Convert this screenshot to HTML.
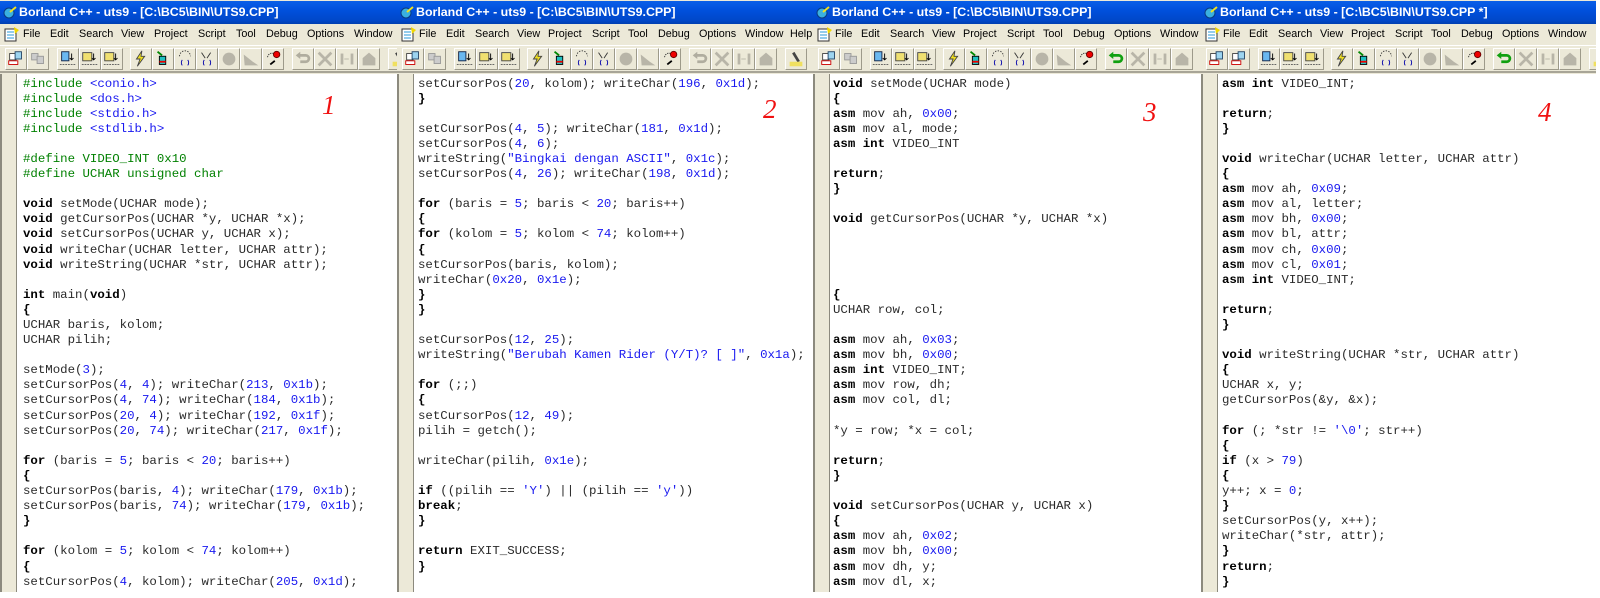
<!DOCTYPE html>
<html><head><meta charset="utf-8">
<style>
*{margin:0;padding:0;box-sizing:border-box}
body{width:1600px;height:598px;background:#fff;position:relative;overflow:hidden;font-family:"Liberation Sans",sans-serif}
.p{position:absolute;top:0;height:598px;overflow:hidden;background:#ece9d8}
.tb{position:absolute;left:0;right:0;top:1px;height:23px;background:linear-gradient(#0a5fe8,#0050dc 40%,#0047c8 85%,#003fb0);color:#fff;font-weight:bold;font-size:12.4px;line-height:23px;padding-left:19px;white-space:nowrap}
.ti{position:absolute;left:3px;top:5px;width:14px;height:13px}
.mb{position:absolute;left:0;right:0;top:24px;height:21px;background:#ece9d8;font-size:10.8px;color:#000}
.mb span{position:absolute;top:4px;white-space:nowrap}
.mi{position:absolute;left:3px;top:2px;width:17px;height:17px}
.tl{position:absolute;left:0;right:0;top:45px;height:28px;background:#ece9d8;border-top:1px solid #fff;border-bottom:2px solid #a8a597}
.bt{position:absolute;top:2px;width:22px;height:22px;border:1px solid;border-color:#fff #9d9a8a #9d9a8a #fff;background:#ece9d8}
.ed{position:absolute;left:0;right:0;top:74px;bottom:6px;background:#fff;border-left:2px solid #8c8a7e}
.gt{position:absolute;left:0;top:0;bottom:0;width:15px;background:#ece9d8;border-right:1px solid #8c8a7e}
.cd{position:absolute;top:2.5px;font-family:"Liberation Mono",monospace;font-size:12.4px;line-height:15.1px;color:#2a2a2a;white-space:pre}
.k{font-weight:bold;color:#000}
.n{color:#1818f0}
.g{color:#008000}
.num{position:absolute;font-family:"Liberation Serif",serif;font-style:italic;color:#f01010;font-size:27px}
.bot{position:absolute;left:0;right:0;bottom:0;height:6px;background:#fff}
</style></head><body>

<!-- panel 1 -->
<div class="p" style="left:0;width:397px">
<div class="tb"><svg class="ti" viewBox="0 0 14 13"><circle cx="6" cy="7" r="5" fill="#3ab0e0" stroke="#0a3a80"/><path d="M7 6 L13 1" stroke="#f0e020" stroke-width="2"/></svg>Borland C++ - uts9 - [C:\BC5\BIN\UTS9.CPP]</div>
<div class="mb"><svg class="mi" viewBox="0 0 17 17"><rect x="2" y="3" width="11" height="12" fill="#fff" stroke="#333"/><path d="M4 6h7M4 9h7M4 12h7" stroke="#2a9ad8"/><path d="M11 1 l5 3 -4 4z" fill="#f0d800"/></svg>
<span style="left:23px">File</span><span style="left:50px">Edit</span><span style="left:79px">Search</span><span style="left:121px">View</span><span style="left:154px">Project</span><span style="left:198px">Script</span><span style="left:236px">Tool</span><span style="left:266px">Debug</span><span style="left:307px">Options</span><span style="left:354px">Window</span></div>
<div class="tl" data-o="0"></div>
<div class="ed"><div class="gt"></div>
<div class="cd" style="left:21px"><span class="g">#include</span> <span class="n">&lt;conio.h&gt;</span>
<span class="g">#include</span> <span class="n">&lt;dos.h&gt;</span>
<span class="g">#include</span> <span class="n">&lt;stdio.h&gt;</span>
<span class="g">#include</span> <span class="n">&lt;stdlib.h&gt;</span>

<span class="g">#define VIDEO_INT 0x10</span>
<span class="g">#define UCHAR unsigned char</span>

<span class="k">void</span> setMode(UCHAR mode);
<span class="k">void</span> getCursorPos(UCHAR *y, UCHAR *x);
<span class="k">void</span> setCursorPos(UCHAR y, UCHAR x);
<span class="k">void</span> writeChar(UCHAR letter, UCHAR attr);
<span class="k">void</span> writeString(UCHAR *str, UCHAR attr);

<span class="k">int</span> main(<span class="k">void</span>)
<span class="k">{</span>
UCHAR baris, kolom;
UCHAR pilih;

setMode(<span class="n">3</span>);
setCursorPos(<span class="n">4</span>, <span class="n">4</span>); writeChar(<span class="n">213</span>, <span class="n">0x1b</span>);
setCursorPos(<span class="n">4</span>, <span class="n">74</span>); writeChar(<span class="n">184</span>, <span class="n">0x1b</span>);
setCursorPos(<span class="n">20</span>, <span class="n">4</span>); writeChar(<span class="n">192</span>, <span class="n">0x1f</span>);
setCursorPos(<span class="n">20</span>, <span class="n">74</span>); writeChar(<span class="n">217</span>, <span class="n">0x1f</span>);

<span class="k">for</span> (baris = <span class="n">5</span>; baris &lt; <span class="n">20</span>; baris++)
<span class="k">{</span>
setCursorPos(baris, <span class="n">4</span>); writeChar(<span class="n">179</span>, <span class="n">0x1b</span>);
setCursorPos(baris, <span class="n">74</span>); writeChar(<span class="n">179</span>, <span class="n">0x1b</span>);
<span class="k">}</span>

<span class="k">for</span> (kolom = <span class="n">5</span>; kolom &lt; <span class="n">74</span>; kolom++)
<span class="k">{</span>
setCursorPos(<span class="n">4</span>, kolom); writeChar(<span class="n">205</span>, <span class="n">0x1d</span>);</div>
</div><div class="bot"></div>
<div class="num" style="left:322px;top:90px">1</div>
</div>

<!-- panel 2 -->
<div class="p" style="left:397px;width:416px">
<div class="tb"><svg class="ti" viewBox="0 0 14 13"><circle cx="6" cy="7" r="5" fill="#3ab0e0" stroke="#0a3a80"/><path d="M7 6 L13 1" stroke="#f0e020" stroke-width="2"/></svg>Borland C++ - uts9 - [C:\BC5\BIN\UTS9.CPP]</div>
<div class="mb"><svg class="mi" viewBox="0 0 17 17"><rect x="2" y="3" width="11" height="12" fill="#fff" stroke="#333"/><path d="M4 6h7M4 9h7M4 12h7" stroke="#2a9ad8"/><path d="M11 1 l5 3 -4 4z" fill="#f0d800"/></svg>
<span style="left:22px">File</span><span style="left:49px">Edit</span><span style="left:78px">Search</span><span style="left:120px">View</span><span style="left:151px">Project</span><span style="left:195px">Script</span><span style="left:231px">Tool</span><span style="left:261px">Debug</span><span style="left:302px">Options</span><span style="left:348px">Window</span><span style="left:393px">Help</span></div>
<div class="tl" data-o="1"></div>
<div class="ed"><div class="gt"></div>
<div class="cd" style="left:19px">setCursorPos(<span class="n">20</span>, kolom); writeChar(<span class="n">196</span>, <span class="n">0x1d</span>);
<span class="k">}</span>

setCursorPos(<span class="n">4</span>, <span class="n">5</span>); writeChar(<span class="n">181</span>, <span class="n">0x1d</span>);
setCursorPos(<span class="n">4</span>, <span class="n">6</span>);
writeString(<span class="n">"Bingkai dengan ASCII"</span>, <span class="n">0x1c</span>);
setCursorPos(<span class="n">4</span>, <span class="n">26</span>); writeChar(<span class="n">198</span>, <span class="n">0x1d</span>);

<span class="k">for</span> (baris = <span class="n">5</span>; baris &lt; <span class="n">20</span>; baris++)
<span class="k">{</span>
<span class="k">for</span> (kolom = <span class="n">5</span>; kolom &lt; <span class="n">74</span>; kolom++)
<span class="k">{</span>
setCursorPos(baris, kolom);
writeChar(<span class="n">0x20</span>, <span class="n">0x1e</span>);
<span class="k">}</span>
<span class="k">}</span>

setCursorPos(<span class="n">12</span>, <span class="n">25</span>);
writeString(<span class="n">"Berubah Kamen Rider (Y/T)? [ ]"</span>, <span class="n">0x1a</span>);

<span class="k">for</span> (;;)
<span class="k">{</span>
setCursorPos(<span class="n">12</span>, <span class="n">49</span>);
pilih = getch();

writeChar(pilih, <span class="n">0x1e</span>);

<span class="k">if</span> ((pilih == <span class="n">'Y'</span>) || (pilih == <span class="n">'y'</span>))
<span class="k">break</span>;
<span class="k">}</span>

<span class="k">return</span> EXIT_SUCCESS;
<span class="k">}</span></div>
</div><div class="bot"></div>
<div class="num" style="left:366px;top:94px">2</div>
</div>

<!-- panel 3 -->
<div class="p" style="left:813px;width:388px">
<div class="tb"><svg class="ti" viewBox="0 0 14 13"><circle cx="6" cy="7" r="5" fill="#3ab0e0" stroke="#0a3a80"/><path d="M7 6 L13 1" stroke="#f0e020" stroke-width="2"/></svg>Borland C++ - uts9 - [C:\BC5\BIN\UTS9.CPP]</div>
<div class="mb"><svg class="mi" viewBox="0 0 17 17"><rect x="2" y="3" width="11" height="12" fill="#fff" stroke="#333"/><path d="M4 6h7M4 9h7M4 12h7" stroke="#2a9ad8"/><path d="M11 1 l5 3 -4 4z" fill="#f0d800"/></svg>
<span style="left:22px">File</span><span style="left:48px">Edit</span><span style="left:77px">Search</span><span style="left:119px">View</span><span style="left:150px">Project</span><span style="left:194px">Script</span><span style="left:230px">Tool</span><span style="left:260px">Debug</span><span style="left:301px">Options</span><span style="left:347px">Window</span></div>
<div class="tl" data-o="0"></div>
<div class="ed"><div class="gt"></div>
<div class="cd" style="left:18px"><span class="k">void</span> setMode(UCHAR mode)
<span class="k">{</span>
<span class="k">asm</span> mov ah, <span class="n">0x00</span>;
<span class="k">asm</span> mov al, mode;
<span class="k">asm</span> <span class="k">int</span> VIDEO_INT

<span class="k">return</span>;
<span class="k">}</span>

<span class="k">void</span> getCursorPos(UCHAR *y, UCHAR *x)




<span class="k">{</span>
UCHAR row, col;

<span class="k">asm</span> mov ah, <span class="n">0x03</span>;
<span class="k">asm</span> mov bh, <span class="n">0x00</span>;
<span class="k">asm</span> <span class="k">int</span> VIDEO_INT;
<span class="k">asm</span> mov row, dh;
<span class="k">asm</span> mov col, dl;

*y = row; *x = col;

<span class="k">return</span>;
<span class="k">}</span>

<span class="k">void</span> setCursorPos(UCHAR y, UCHAR x)
<span class="k">{</span>
<span class="k">asm</span> mov ah, <span class="n">0x02</span>;
<span class="k">asm</span> mov bh, <span class="n">0x00</span>;
<span class="k">asm</span> mov dh, y;
<span class="k">asm</span> mov dl, x;</div>
</div><div class="bot"></div>
<div class="num" style="left:330px;top:97px">3</div>
</div>

<!-- panel 4 -->
<div class="p" style="left:1201px;width:395px">
<div class="tb"><svg class="ti" viewBox="0 0 14 13"><circle cx="6" cy="7" r="5" fill="#3ab0e0" stroke="#0a3a80"/><path d="M7 6 L13 1" stroke="#f0e020" stroke-width="2"/></svg>Borland C++ - uts9 - [C:\BC5\BIN\UTS9.CPP *]</div>
<div class="mb"><svg class="mi" viewBox="0 0 17 17"><rect x="2" y="3" width="11" height="12" fill="#fff" stroke="#333"/><path d="M4 6h7M4 9h7M4 12h7" stroke="#2a9ad8"/><path d="M11 1 l5 3 -4 4z" fill="#f0d800"/></svg>
<span style="left:22px">File</span><span style="left:48px">Edit</span><span style="left:77px">Search</span><span style="left:119px">View</span><span style="left:150px">Project</span><span style="left:194px">Script</span><span style="left:230px">Tool</span><span style="left:260px">Debug</span><span style="left:301px">Options</span><span style="left:347px">Window</span></div>
<div class="tl" data-o="0"></div>
<div class="ed"><div class="gt"></div>
<div class="cd" style="left:19px"><span class="k">asm</span> <span class="k">int</span> VIDEO_INT;

<span class="k">return</span>;
<span class="k">}</span>

<span class="k">void</span> writeChar(UCHAR letter, UCHAR attr)
<span class="k">{</span>
<span class="k">asm</span> mov ah, <span class="n">0x09</span>;
<span class="k">asm</span> mov al, letter;
<span class="k">asm</span> mov bh, <span class="n">0x00</span>;
<span class="k">asm</span> mov bl, attr;
<span class="k">asm</span> mov ch, <span class="n">0x00</span>;
<span class="k">asm</span> mov cl, <span class="n">0x01</span>;
<span class="k">asm</span> <span class="k">int</span> VIDEO_INT;

<span class="k">return</span>;
<span class="k">}</span>

<span class="k">void</span> writeString(UCHAR *str, UCHAR attr)
<span class="k">{</span>
UCHAR x, y;
getCursorPos(&amp;y, &amp;x);

<span class="k">for</span> (; *str != <span class="n">'\0'</span>; str++)
<span class="k">{</span>
<span class="k">if</span> (x &gt; <span class="n">79</span>)
<span class="k">{</span>
y++; x = <span class="n">0</span>;
<span class="k">}</span>
setCursorPos(y, x++);
writeChar(*str, attr);
<span class="k">}</span>
<span class="k">return</span>;
<span class="k">}</span></div>
</div><div class="bot"></div>
<div class="num" style="left:337px;top:97px">4</div>
</div>

<script>
var icons=[
'<rect x="4" y="5" width="7" height="7" fill="#fff" stroke="#444"/><rect x="10" y="3" width="7" height="8" fill="#9cd4f0" stroke="#246"/><rect x="3" y="13" width="10" height="4" fill="#fff" stroke="#c00"/>',
'<rect x="4" y="5" width="7" height="7" fill="#ccc" stroke="#999"/><rect x="10" y="8" width="7" height="8" fill="#ccc" stroke="#999"/>',
'<rect x="4" y="3" width="8" height="10" fill="#6ab8f0" stroke="#124"/><path d="M15 5v7M13 10l2 2 2-2" stroke="#000" fill="none"/><path d="M2 17h17" stroke="#555" stroke-dasharray="2 1"/>',
'<rect x="3" y="4" width="10" height="9" fill="#f0e070" stroke="#444"/><path d="M15 5v7M13 10l2 2 2-2" stroke="#000" fill="none"/><path d="M2 17h17" stroke="#555" stroke-dasharray="2 1"/>',
'<rect x="3" y="4" width="10" height="9" fill="#f0e070" stroke="#444"/><path d="M15 5v7M13 10l2 2 2-2" stroke="#000" fill="none"/><path d="M2 17h17" stroke="#555" stroke-dasharray="2 1"/>',
'<path d="M12 2 L6 11 H10 L7 19 L15 8 H11z" fill="#f0e020" stroke="#444"/>',
'<path d="M5 3l5 4" stroke="#080" stroke-width="2"/><rect x="7" y="8" width="7" height="9" fill="#20c0c0" stroke="#000"/><rect x="7" y="13" width="7" height="2" fill="#e00"/>',
'<path d="M5 8a6 6 0 0 1 12 0" stroke="#333" fill="none" stroke-dasharray="1.5 1.5"/><path d="M8 12a3 4 0 0 0 0 6M14 12a3 4 0 0 1 0 6" stroke="#00a" fill="none"/>',
'<path d="M5 4l4 6M15 4l-4 6" stroke="#333"/><path d="M8 12a3 4 0 0 0 0 6M14 12a3 4 0 0 1 0 6" stroke="#00a" fill="none"/>',
'<circle cx="11" cy="11" r="7" fill="#b8b5a8"/>',
'<path d="M3 6l10 8 6 4H4z" fill="#b8b5a8"/>',
'<path d="M5 9a5 5 0 0 1 7-4" stroke="#333" fill="none" stroke-dasharray="1.5 1"/><circle cx="15" cy="6" r="3.5" fill="#e00" stroke="#600"/><path d="M8 17l5-4" stroke="#000" stroke-width="2"/>',
'<path d="M7 7h7a3 3 0 0 1 0 7H8" stroke="#b0ad9f" stroke-width="3" fill="none"/><path d="M3 7l5-4v8z" fill="#b0ad9f"/>',
'<path d="M4 4l14 14M18 4L4 18" stroke="#b8b5a8" stroke-width="3"/>',
'<rect x="4" y="5" width="3" height="12" fill="#b8b5a8"/><rect x="15" y="5" width="3" height="12" fill="#b8b5a8"/><path d="M8 11h5" stroke="#b8b5a8"/>',
'<path d="M4 10l7-6 7 6v8H4z" fill="#b8b5a8"/>'
];
var greenUndo='<path d="M7 7h7a3 3 0 0 1 0 7H8" stroke="#10a010" stroke-width="3" fill="none"/><path d="M3 7l5-4v8z" fill="#10a010"/>';
var pos=[5,27,57,79,101,130,152,174,196,218,240,262,292,314,336,358,388];
document.querySelectorAll('.tl').forEach(function(t,pi){
  var h='';
  for(var i=0;i<pos.length;i++){
    var ic=i<16?icons[i]:'<path d="M8 4l6 10" stroke="#444" stroke-width="3"/><path d="M4 14h14v5H4z" fill="#f0e060"/>';
    if(i==12 && (pi==2||pi==3)) ic=greenUndo;
    if(i==1 && pi==3) ic=icons[0];
    h+='<div class="bt" style="left:'+pos[i]+'px"><svg width="20" height="20" viewBox="0 0 22 22">'+ic+'</svg></div>';
  }
  t.innerHTML=h;
});
</script>
</body></html>
